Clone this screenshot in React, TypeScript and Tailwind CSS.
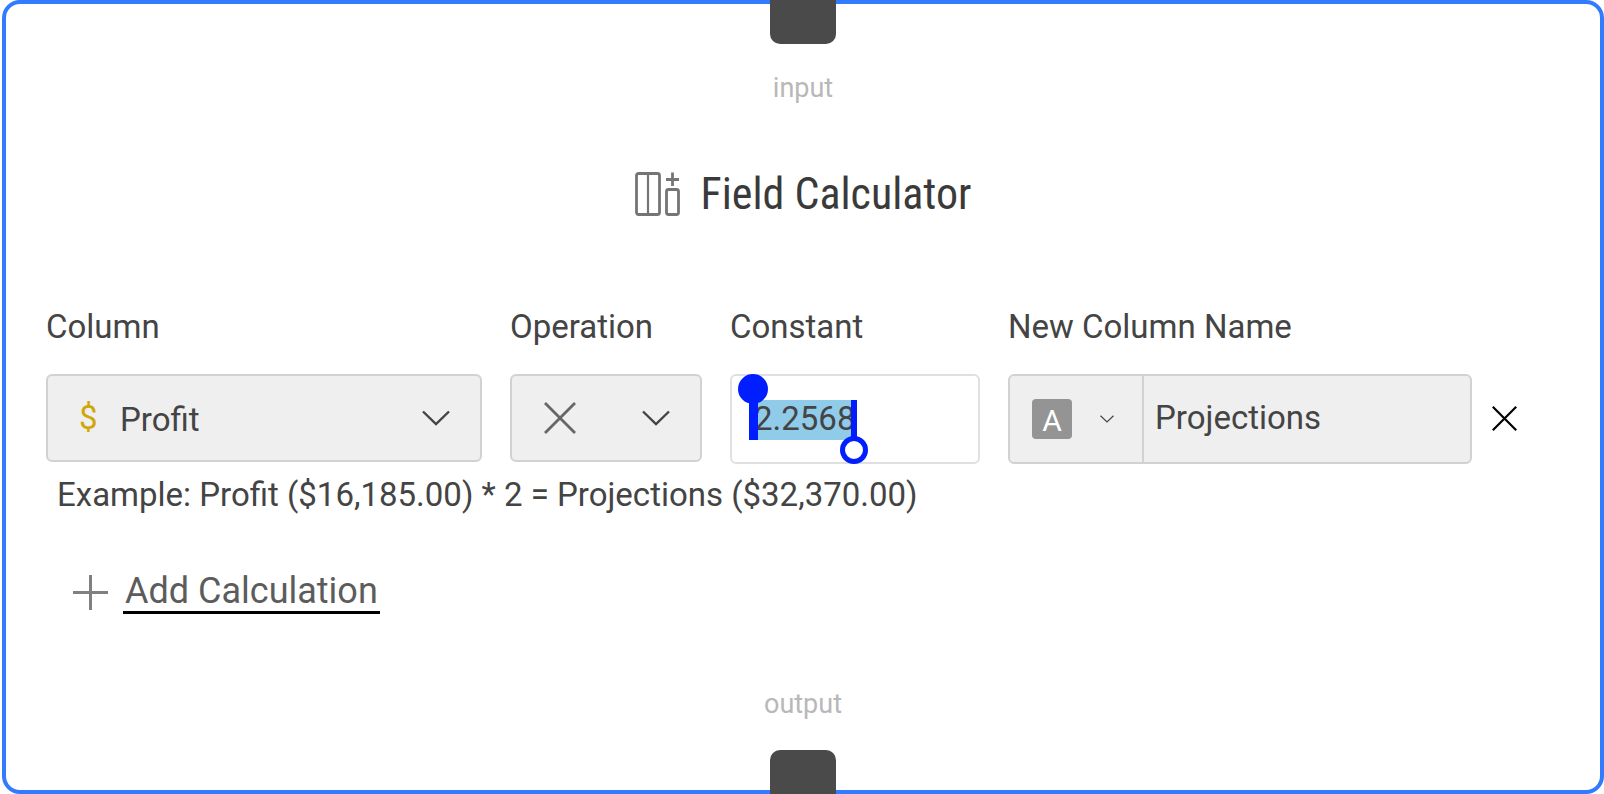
import React from 'react';

type IconProps = { className?: string };

const ChevronIcon: React.FC<IconProps> = ({ className }) => (
  <svg viewBox="0 0 28 16" fill="none" stroke="currentColor" strokeWidth="2.4" className={className} aria-hidden="true">
    <path d="M1 1.5 L14 14 L27 1.5" />
  </svg>
);

const CrossIcon: React.FC<IconProps> = ({ className }) => (
  <svg viewBox="0 0 32 32" fill="none" stroke="currentColor" strokeWidth="2.8" className={className} aria-hidden="true">
    <path d="M1 1 L31 31 M31 1 L1 31" />
  </svg>
);

const PlusIcon: React.FC<IconProps> = ({ className }) => (
  <svg viewBox="0 0 36 36" fill="none" stroke="currentColor" strokeWidth="3" className={className} aria-hidden="true">
    <path d="M17.5 0 V35 M0 17.5 H35" />
  </svg>
);

const FieldCalculatorIcon: React.FC<IconProps> = ({ className }) => (
  <svg viewBox="0 0 46 44" fill="none" stroke="currentColor" strokeWidth="2.8" className={className} aria-hidden="true">
    <rect x="1.5" y="1.5" width="23" height="41" rx="2" />
    <path d="M13 1 V43" strokeWidth="2.2" />
    <rect x="31.5" y="17.5" width="12" height="25" rx="2" />
    <path d="M37.5 0.5 V14 M31 7.5 H44" />
  </svg>
);

const Connector: React.FC<{ side: 'top' | 'bottom' }> = ({ side }) => (
  <span
    className={
      side === 'top'
        ? 'absolute -top-1 left-1/2 h-11 w-[66px] -translate-x-1/2 rounded-b-[10px] bg-[#4a4a4a]'
        : 'absolute -bottom-1 left-1/2 h-11 w-[66px] -translate-x-1/2 rounded-t-[10px] bg-[#4a4a4a]'
    }
  />
);

const SelectionHandles: React.FC = () => (
  <>
    <span className="absolute top-6 left-[17px] h-10 w-[9px] bg-[#001eff]" />
    <span className="absolute -top-0.5 left-[6px] size-[30px] rounded-full bg-[#001eff]" />
    <span className="absolute top-6 left-[119px] h-10 w-[6px] bg-[#001eff]" />
    <span className="absolute top-[60px] left-[108px] size-7 rounded-full border-5 border-[#001eff] bg-white" />
  </>
);

const App: React.FC = () => {
  return (
    <main className="relative ml-0.5 flex min-h-screen flex-col rounded-[18px] border-4 border-[#327bff] bg-white font-['Roboto',sans-serif] text-[33px] leading-10 text-[#444444]">
      <Connector side="top" />

      <p className="mt-16 text-center text-[27px] text-[#b8b8b8]">input</p>

      <header className="mt-[54px] flex h-16 items-center justify-center gap-5">
        <FieldCalculatorIcon className="h-11 w-[46px] text-[#757575]" />
        <h1 className="font-['Roboto_Condensed','Roboto',sans-serif] text-[44px] leading-[56px] text-[#3a3a3a]">Field Calculator</h1>
      </header>

      <form className="mt-[81px] pr-20 pl-10" onSubmit={(e) => e.preventDefault()}>
        <div className="flex">
          <div className="grid flex-1 grid-cols-[436fr_192fr_250fr_464fr] gap-x-7">
            <div className="min-w-0">
              <label htmlFor="column">Column</label>
              <div className="relative mt-[27px] flex h-[88px] items-center rounded-md border-2 border-[#d2d2d2] bg-[#efefef]">
                <span className="pointer-events-none absolute left-[31px] text-[#cfa70b]">$</span>
                <select id="column" className="h-full w-full appearance-none pt-1 pl-[72px] outline-none">
                  <option>Profit</option>
                </select>
                <ChevronIcon className="pointer-events-none absolute right-[30px] h-4 w-7" />
              </div>
            </div>

            <div className="min-w-0">
              <label htmlFor="operation">Operation</label>
              <div className="relative mt-[27px] flex h-[88px] items-center justify-between rounded-md border-2 border-[#d2d2d2] bg-[#efefef] pr-[30px] pl-8">
                <CrossIcon className="size-8 text-[#666666]" />
                <ChevronIcon className="h-4 w-7" />
                <select id="operation" className="absolute inset-0 opacity-0">
                  <option value="multiply" aria-label="Multiply" />
                </select>
              </div>
            </div>

            <div className="min-w-0">
              <label htmlFor="constant">Constant</label>
              <div className="relative mt-[27px] flex h-[90px] items-center rounded-md border-2 border-[#e0e0e0] bg-white">
                <span className="absolute top-6 left-5 h-10 w-[104px] bg-[#90cbea]" />
                <input
                  id="constant"
                  type="text"
                  defaultValue="2.2568"
                  className="relative h-full w-full bg-transparent pb-0.5 pl-[22px] outline-none"
                />
                <SelectionHandles />
              </div>
            </div>

            <div className="min-w-0">
              <label htmlFor="new-name">New Column Name</label>
              <div className="mt-[27px] flex h-[90px] rounded-md border-2 border-[#d2d2d2] bg-[#efefef]">
                <div className="relative flex w-[134px] shrink-0 items-center justify-between border-r-2 border-[#d2d2d2] pr-7 pl-[22px]">
                  <span className="flex size-10 items-center justify-center rounded-sm bg-[#949494] pt-1 text-[30px] text-white">A</span>
                  <ChevronIcon className="h-2 w-3.5" />
                  <select aria-label="Column type" className="absolute inset-0 opacity-0">
                    <option value="text" aria-label="Text" />
                  </select>
                </div>
                <input
                  id="new-name"
                  type="text"
                  defaultValue="Projections"
                  className="min-w-0 flex-1 bg-transparent pb-0.5 pl-[11px] outline-none"
                />
              </div>
            </div>
          </div>

          <button type="button" aria-label="Remove calculation" className="mt-[67px] ml-4 flex h-[88px] w-8 items-center justify-center text-black">
            <CrossIcon className="size-[25px]" />
          </button>
        </div>

        <p className="mt-[11px] pl-[11px]">Example: Profit ($16,185.00) * 2 = Projections ($32,370.00)</p>

        <button type="button" className="mt-14 ml-[27px] flex items-center gap-3.5 text-[36px] text-[#5c5c5c]">
          <PlusIcon className="size-9 text-[#808080]" />
          <span className="border-b-3 border-black px-0.5">Add Calculation</span>
        </button>
      </form>

      <p className="mt-auto mb-[66px] text-center text-[27px] text-[#b8b8b8]">output</p>

      <Connector side="bottom" />
    </main>
  );
};

export default App;
